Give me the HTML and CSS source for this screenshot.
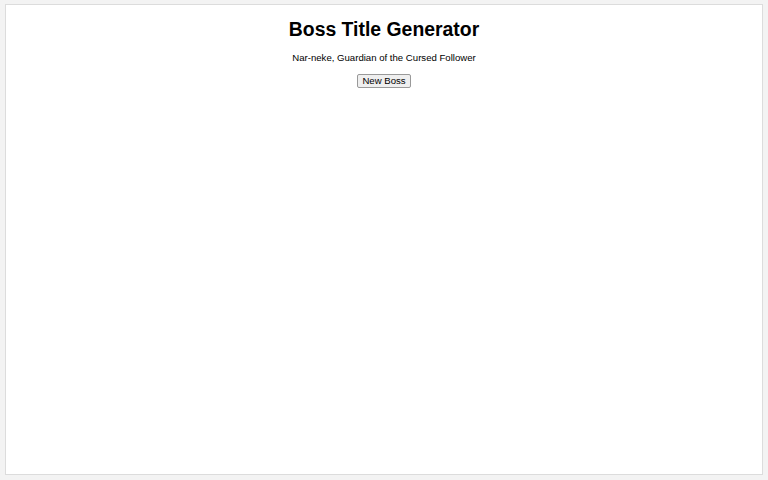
FILE: index.html
```html
<!DOCTYPE html>
<html>
<head>
<meta charset="utf-8">
<title>Boss Title Generator</title>
<link rel="stylesheet" href="styles.css">
</head>
<body>
<div class="panel">
	<h1 class="title">Boss Title Generator</h1>
	<p class="boss-name">Nar-neke, Guardian of the Cursed Follower</p>
	<button class="new-boss">New Boss</button>
</div>
</body>
</html>
```

FILE: styles.css
```css
html, body{height:100%;}
body{margin:0; padding:4px 5px 5px; box-sizing:border-box; background-color:#f3f3f3; font-family:"Liberation Sans", Arial, sans-serif; color:#000;}
.panel{height:100%; box-sizing:border-box; background-color:#fff; border:1px solid #dcdcdc; text-align:center; padding-top:14px;}
.title{font-size:19.4px; margin:0 0 13px; line-height:20px;}
.boss-name{font-size:9.6px; margin:0 0 7px;}
.new-boss{font-family:"Liberation Sans", Arial, sans-serif; font-size:9.6px; line-height:12px; padding:0 4px; border:1px solid #999; border-radius:2px; background-color:#efefef; color:#000;}
```
